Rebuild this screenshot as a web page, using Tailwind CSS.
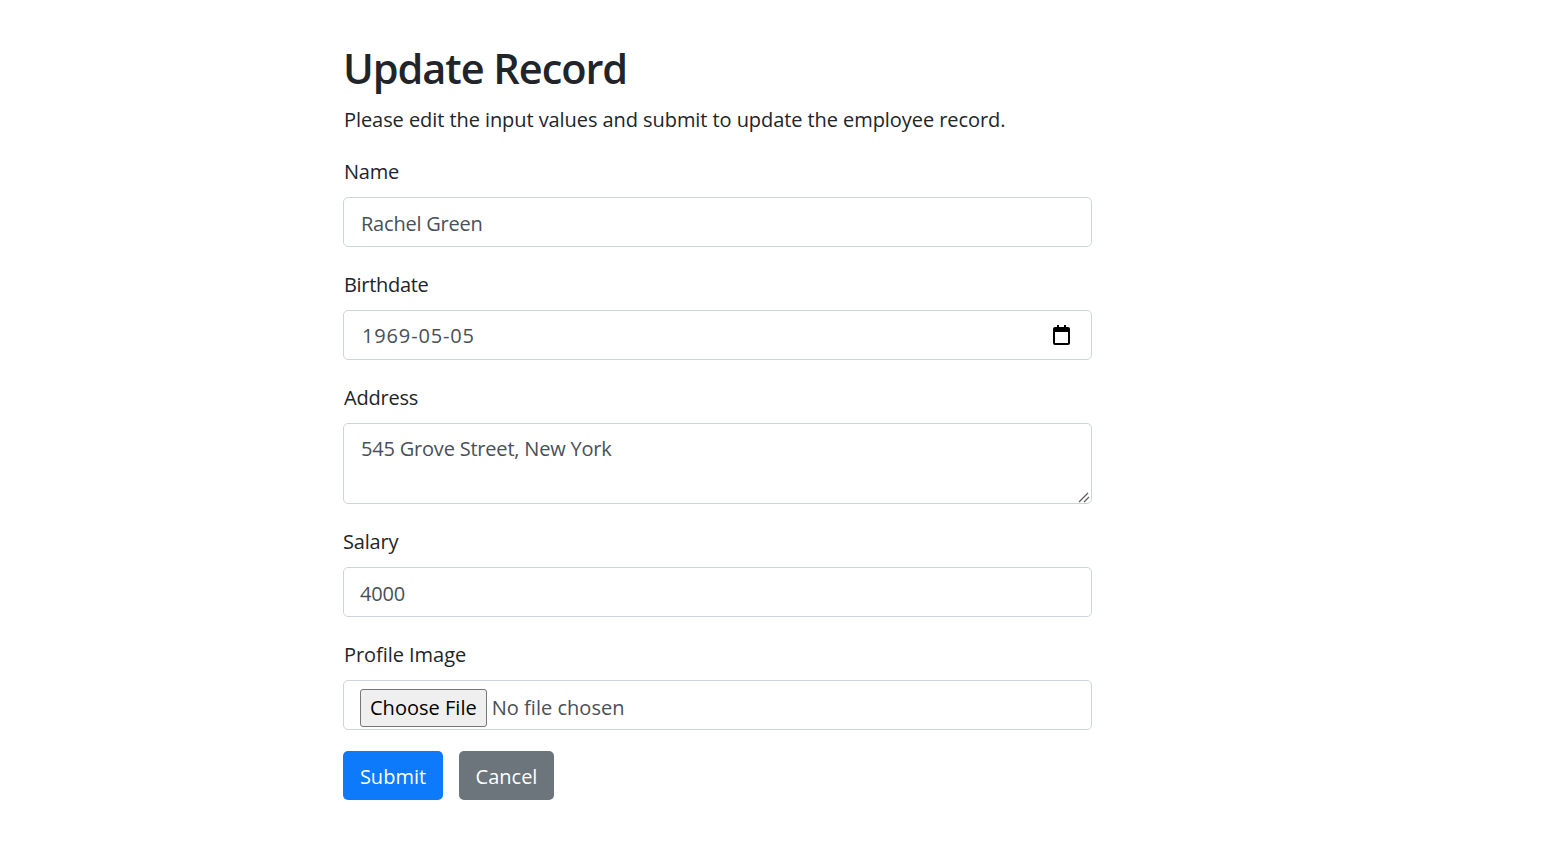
<!DOCTYPE html>
<html lang="en">
<head>
    <meta charset="UTF-8">
    <meta name="viewport" content="width=device-width, initial-scale=1.0">
    <title>Update Record</title>
    <script src="https://cdn.jsdelivr.net/npm/@tailwindcss/browser@4"></script>
</head>
<body class="min-h-screen bg-white text-[#212529] font-['Open_Sans',sans-serif] text-[20px]">
    <div class="w-[749px] ml-[343px] pt-[40px]">
        <h2 class="text-[41.5px] leading-[56px] font-[540] tracking-[-1.05px]">Update Record</h2>
        <p class="text-[20px] leading-[30px] mt-[9px] pl-px tracking-[-0.07px]">Please edit the input values and submit to update the employee record.</p>

        <form>
            <div class="mt-[22px]">
                <label class="block text-[20px] leading-[30px] pl-px mb-[10px] tracking-[-0.2px]">Name</label>
                <input type="text" value="Rachel Green" class="block w-full h-[50px] px-[17px] pt-[2px] border border-[#ced4da] rounded-[5px] text-[#495057] text-[20px] tracking-[-0.22px]">
            </div>
            <div class="mt-[23px]">
                <label class="block text-[20px] leading-[30px] pl-px mb-[10px] tracking-[-0.3px]">Birthdate</label>
                <div class="flex items-center justify-between w-full h-[50px] pl-[18px] pr-[21px] border border-[#ced4da] rounded-[5px] text-[#495057] text-[20px]">
                    <span class="pt-[2px] tracking-[0.85px]">1969-05-05</span>
                    <svg class="w-[17px] h-[20px]" viewBox="0 0 17 20" fill="none" xmlns="http://www.w3.org/2000/svg">
                        <path d="M4 0h2v3H4zM11 0h2v3h-2z" fill="#000"></path>
                        <path d="M1 3h15v4H1z" fill="#000"></path>
                        <rect x="1" y="3" width="15" height="16" rx="1" stroke="#000" stroke-width="2"></rect>
                    </svg>
                </div>
            </div>
            <div class="mt-[23px]">
                <label class="block text-[20px] leading-[30px] pl-px mb-[10px] tracking-[-0.2px]">Address</label>
                <div class="relative">
                    <textarea class="block w-full h-[81px] resize-none px-[17px] py-[10px] leading-[30px] border border-[#ced4da] rounded-[5px] text-[#495057] text-[20px] tracking-[-0.2px]">545 Grove Street, New York</textarea>
                    <svg class="absolute right-[2px] bottom-[1px] w-[12px] h-[12px]" viewBox="0 0 12 12" fill="none" xmlns="http://www.w3.org/2000/svg">
                        <path d="M1 11L10 2M6 11L11 6" stroke="#5f5f5f" stroke-width="1.3"></path>
                    </svg>
                </div>
            </div>
            <div class="mt-[23px]">
                <label class="block text-[20px] leading-[30px] mb-[10px] tracking-[-0.2px]">Salary</label>
                <input type="text" value="4000" class="block w-full h-[50px] pl-[16px] pr-[17px] pt-[2px] border border-[#ced4da] rounded-[5px] text-[#495057] text-[20px] tracking-[-0.22px]">
            </div>
            <div class="mt-[23px]">
                <label class="block text-[20px] leading-[30px] pl-px mb-[10px] tracking-[-0.05px]">Profile Image</label>
                <input type="file" class="block w-full h-[50px] px-[16px] py-[8px] border border-[#ced4da] rounded-[5px] text-[#495057] text-[20px] tracking-[0.02px] file:h-[38px] file:px-[9px] file:mr-[5px] file:border file:border-[#767676] file:rounded-[3px] file:bg-[#efefef] file:text-black">
            </div>
            <div class="flex gap-4 mt-[21px]">
                <button type="button" class="w-[100px] h-[49px] pt-[2px] bg-[#0d7afb] rounded-[5px] text-white text-[20px]">Submit</button>
                <button type="button" class="w-[95px] h-[49px] pt-[2px] bg-[#6c757b] rounded-[5px] text-white text-[20px]">Cancel</button>
            </div>
        </form>
    </div>
</body>
</html>
